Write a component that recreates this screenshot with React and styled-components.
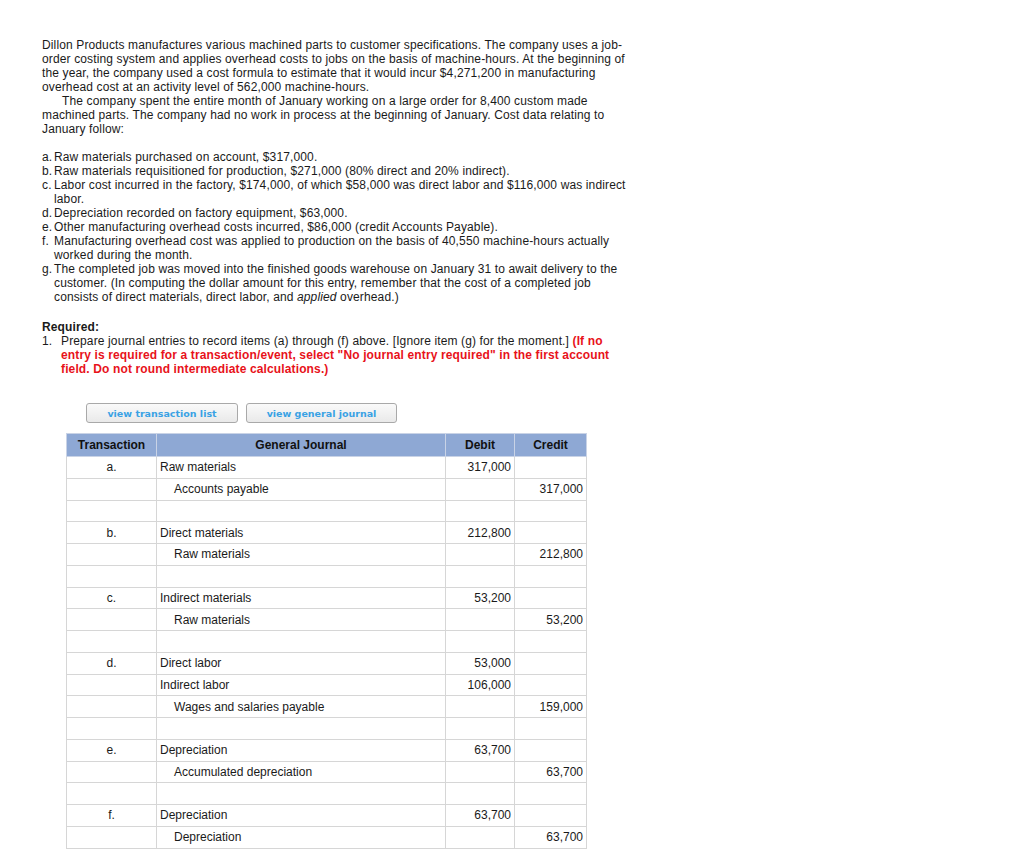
import React from "react";
import styled, { createGlobalStyle } from "styled-components";

const Global = createGlobalStyle`
  html, body { margin: 0; padding: 0; background: #fff; }
  body { font-family: "Liberation Sans", Arial, sans-serif; color: #1a1a1a; }
`;

const Page = styled.div`
  padding: 38px 0 20px 42px;
  font-size: 12px;
  line-height: 14px;
`;

const Prose = styled.div`
  letter-spacing: 0.13px;
`;

const Para = styled.p`
  margin: 0;
  white-space: nowrap;
  text-indent: ${(p) => (p.$indent ? "20px" : "0")};
`;

const List = styled.ol`
  list-style: none;
  margin: 14px 0 0 0;
  padding: 0;
`;

const Item = styled.li`
  display: flex;
  white-space: nowrap;
`;

const Label = styled.span`
  flex: 0 0 ${(p) => p.$w || 12}px;
`;

const Required = styled.div`
  margin-top: 16px;
`;

const Bold = styled.div`
  font-weight: bold;
`;

const Red = styled.span`
  color: #e8121a;
  font-weight: bold;
`;

const Buttons = styled.div`
  display: flex;
  gap: 8px;
  margin: 27px 0 0 44px;
`;

const Button = styled.button`
  width: ${(p) => p.$w}px;
  height: 20px;
  border: 1px solid #a9a9a9;
  border-radius: 3px;
  background: linear-gradient(#fafafa, #e9e9e9);
  color: #3aa2e4;
  font-family: "DejaVu Sans", Verdana, sans-serif;
  font-weight: bold;
  font-size: 9.5px;
  padding: 0;
  cursor: pointer;
`;

const Table = styled.table`
  margin: 10px 0 0 24px;
  border-collapse: collapse;
  width: 520px;
  table-layout: fixed;
  border: 1px solid #c9c9c9;
`;

const Th = styled.th`
  background: #8ea8d4;
  height: 22px;
  padding: 0;
  font-weight: bold;
  font-size: 12px;
  text-align: center;
  border: 1px solid #c9d3e6;
  color: #111;
`;

const Td = styled.td`
  height: 20.75px;
  padding: 0 3px 0 ${(p) => (p.$indent ? 17 : 3)}px;
  border: 1px solid #d6d6d6;
  font-size: 12px;
  text-align: ${(p) => p.$align || "left"};
  white-space: nowrap;
`;

const rows = [
  ["a.", "Raw materials", false, "317,000", ""],
  ["", "Accounts payable", true, "", "317,000"],
  null,
  ["b.", "Direct materials", false, "212,800", ""],
  ["", "Raw materials", true, "", "212,800"],
  null,
  ["c.", "Indirect materials", false, "53,200", ""],
  ["", "Raw materials", true, "", "53,200"],
  null,
  ["d.", "Direct labor", false, "53,000", ""],
  ["", "Indirect labor", false, "106,000", ""],
  ["", "Wages and salaries payable", true, "", "159,000"],
  null,
  ["e.", "Depreciation", false, "63,700", ""],
  ["", "Accumulated depreciation", true, "", "63,700"],
  null,
  ["f.", "Depreciation", false, "63,700", ""],
  ["", "Depreciation", true, "", "63,700"],
];

export default function App() {
  return (
    <>
      <Global />
      <Page>
        <Prose>
          <Para>Dillon Products manufactures various machined parts to customer specifications. The company uses a job-</Para>
          <Para>order costing system and applies overhead costs to jobs on the basis of machine-hours. At the beginning of</Para>
          <Para>the year, the company used a cost formula to estimate that it would incur $4,271,200 in manufacturing</Para>
          <Para>overhead cost at an activity level of 562,000 machine-hours.</Para>
          <Para $indent>The company spent the entire month of January working on a large order for 8,400 custom made</Para>
          <Para>machined parts. The company had no work in process at the beginning of January. Cost data relating to</Para>
          <Para>January follow:</Para>

          <List>
            <Item><Label>a.</Label><span>Raw materials purchased on account, $317,000.</span></Item>
            <Item><Label>b.</Label><span>Raw materials requisitioned for production, $271,000 (80% direct and 20% indirect).</span></Item>
            <Item><Label>c.</Label><span>Labor cost incurred in the factory, $174,000, of which $58,000 was direct labor and $116,000 was indirect<br />labor.</span></Item>
            <Item><Label>d.</Label><span>Depreciation recorded on factory equipment, $63,000.</span></Item>
            <Item><Label>e.</Label><span>Other manufacturing overhead costs incurred, $86,000 (credit Accounts Payable).</span></Item>
            <Item><Label>f.</Label><span>Manufacturing overhead cost was applied to production on the basis of 40,550 machine-hours actually<br />worked during the month.</span></Item>
            <Item><Label>g.</Label><span>The completed job was moved into the finished goods warehouse on January 31 to await delivery to the<br />customer. (In computing the dollar amount for this entry, remember that the cost of a completed job<br />consists of direct materials, direct labor, and <i>applied</i> overhead.)</span></Item>
          </List>

          <Required>
            <Bold>Required:</Bold>
            <Item>
              <Label $w={19}>1.</Label>
              <span>
                Prepare journal entries to record items (a) through (f) above. [Ignore item (g) for the moment.] <Red>(If no</Red>
                <br />
                <Red>entry is required for a transaction/event, select "No journal entry required" in the first account</Red>
                <br />
                <Red>field. Do not round intermediate calculations.)</Red>
              </span>
            </Item>
          </Required>
        </Prose>

        <Buttons>
          <Button $w={152}>view transaction list</Button>
          <Button $w={151}>view general journal</Button>
        </Buttons>

        <Table>
          <colgroup>
            <col style={{ width: 90 }} />
            <col style={{ width: 289 }} />
            <col style={{ width: 69 }} />
            <col style={{ width: 72 }} />
          </colgroup>
          <thead>
            <tr>
              <Th>Transaction</Th>
              <Th>General Journal</Th>
              <Th>Debit</Th>
              <Th>Credit</Th>
            </tr>
          </thead>
          <tbody>
            {rows.map((r, i) =>
              r ? (
                <tr key={i}>
                  <Td $align="center">{r[0]}</Td>
                  <Td $indent={r[2]}>{r[1]}</Td>
                  <Td $align="right">{r[3]}</Td>
                  <Td $align="right">{r[4]}</Td>
                </tr>
              ) : (
                <tr key={i}>
                  <Td />
                  <Td />
                  <Td />
                  <Td />
                </tr>
              )
            )}
          </tbody>
        </Table>
      </Page>
    </>
  );
}
